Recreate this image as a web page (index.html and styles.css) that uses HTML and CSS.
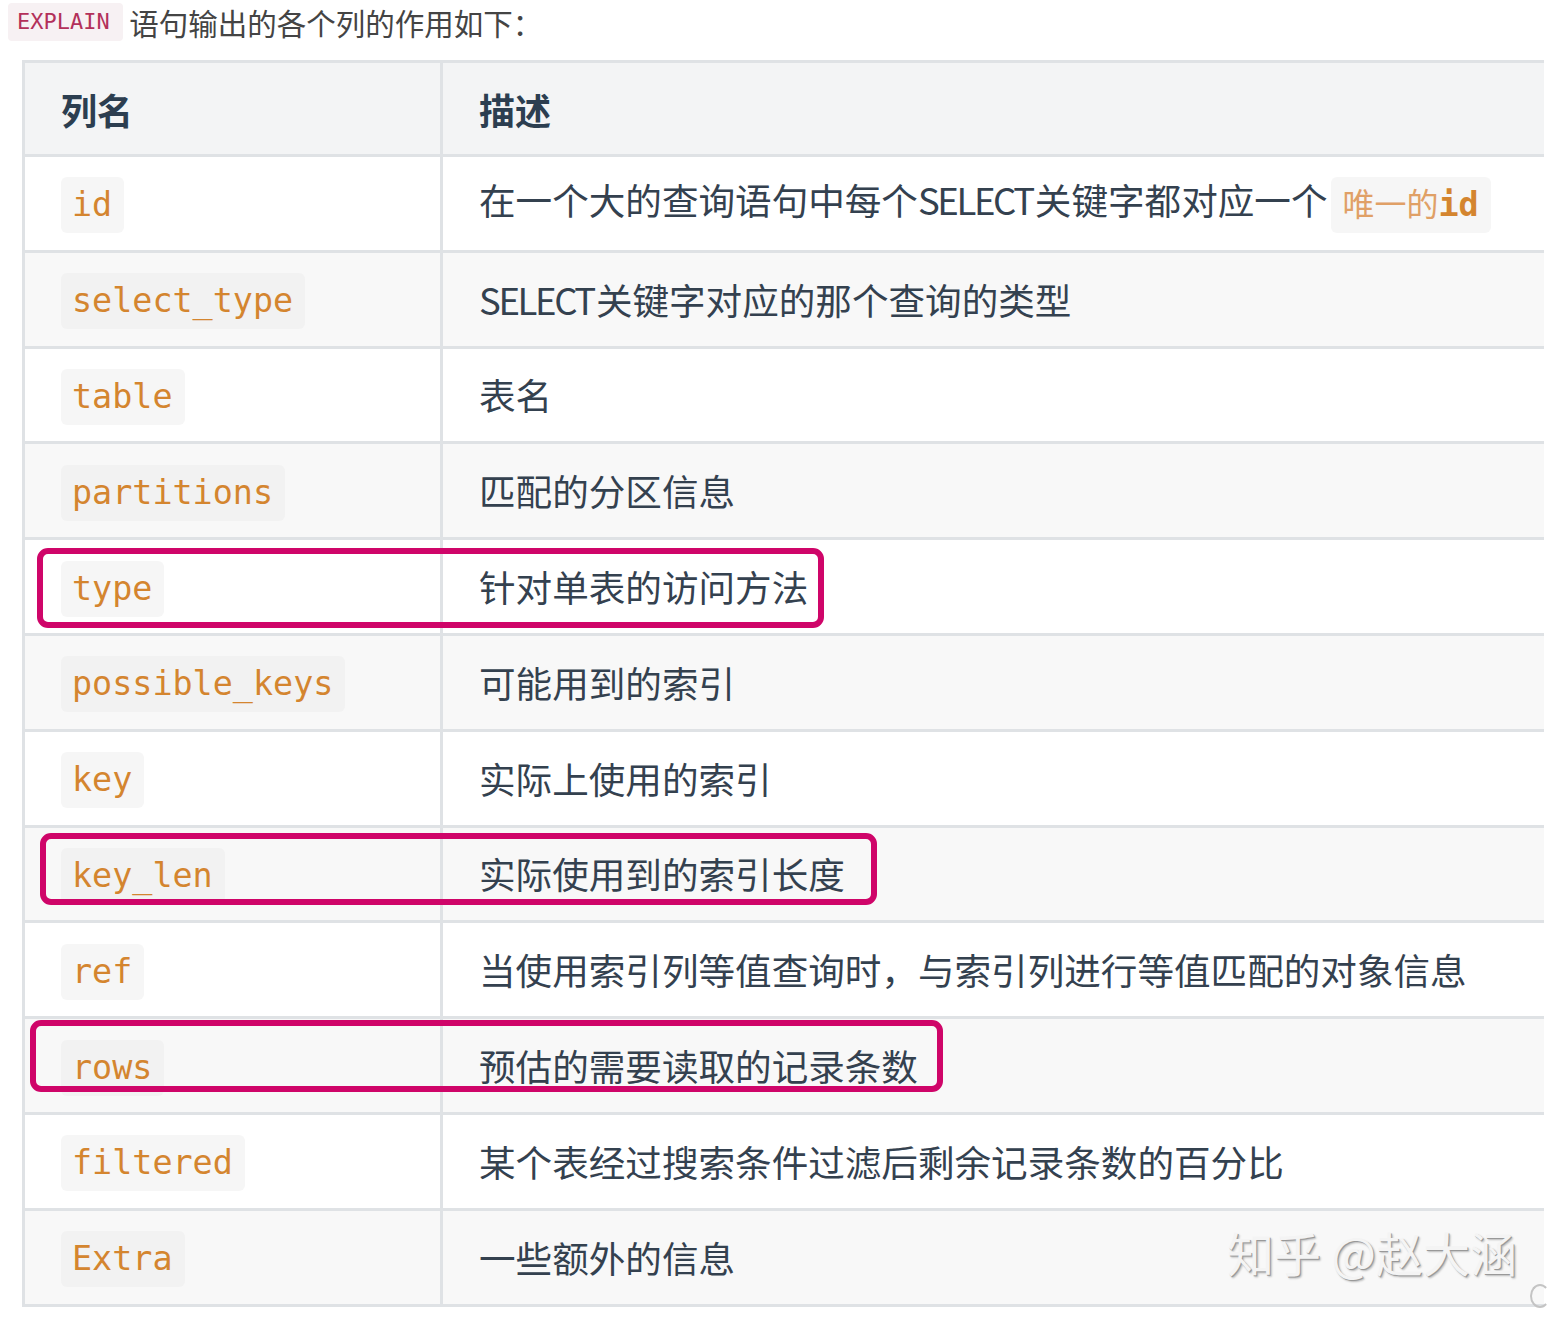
FILE: index.html
```html
<!DOCTYPE html>
<html lang="zh-CN">
<head>
    <meta charset="UTF-8">
    <title>EXPLAIN 输出列</title>
    <link rel="stylesheet" href="styles.css">
</head>
<body>
    <div class="page">
        <p class="intro"><code class="inline-code">EXPLAIN</code> 语句输出的各个列的作用如下：</p>

        <div class="table-wrap">
            <table class="explain-table">
                <thead>
                    <tr>
                        <th class="col-name">列名</th>
                        <th>描述</th>
                    </tr>
                </thead>
                <tbody>
                    <tr>
                        <td><code>id</code></td>
                        <td>在一个大的查询语句中每个<span class="latin">SELECT</span>关键字都对应一个<code class="cjk-code">唯一的<b>id</b></code></td>
                    </tr>
                    <tr>
                        <td><code>select_type</code></td>
                        <td><span class="latin">SELECT</span>关键字对应的那个查询的类型</td>
                    </tr>
                    <tr>
                        <td><code>table</code></td>
                        <td>表名</td>
                    </tr>
                    <tr>
                        <td><code>partitions</code></td>
                        <td>匹配的分区信息</td>
                    </tr>
                    <tr>
                        <td><code>type</code></td>
                        <td>针对单表的访问方法</td>
                    </tr>
                    <tr>
                        <td><code>possible_keys</code></td>
                        <td>可能用到的索引</td>
                    </tr>
                    <tr>
                        <td><code>key</code></td>
                        <td>实际上使用的索引</td>
                    </tr>
                    <tr>
                        <td><code>key_len</code></td>
                        <td>实际使用到的索引长度</td>
                    </tr>
                    <tr>
                        <td><code>ref</code></td>
                        <td>当使用索引列等值查询时，与索引列进行等值匹配的对象信息</td>
                    </tr>
                    <tr>
                        <td><code>rows</code></td>
                        <td>预估的需要读取的记录条数</td>
                    </tr>
                    <tr>
                        <td><code>filtered</code></td>
                        <td>某个表经过搜索条件过滤后剩余记录条数的百分比</td>
                    </tr>
                    <tr>
                        <td><code>Extra</code></td>
                        <td>一些额外的信息</td>
                    </tr>
                </tbody>
            </table>
        </div>

        <!-- 标注框 -->
        <div class="mark mark-type"></div>
        <div class="mark mark-keylen"></div>
        <div class="mark mark-rows"></div>

        <div class="watermark">知乎 @赵大涵</div>
        <div class="corner-arc"></div>
    </div>
</body>
</html>
```

FILE: styles.css
```css
* {
    margin: 0;
    padding: 0;
    box-sizing: border-box;
}

body {
    font-family: 'Noto Sans CJK SC', sans-serif;
    background: #ffffff;
    color: #34414f;
}

.page {
    position: relative;
    width: 1557px;
    min-height: 1320px;
}

.intro {
    padding: 3px 8px 0;
    font-size: 29.5px;
    line-height: 38px;
    color: #444444;
}

.inline-code {
    display: inline-block;
    font-family: 'DejaVu Sans Mono', monospace;
    font-size: 22px;
    line-height: 38px;
    padding: 0 13px 0 9px;
    background: #f7f1f3;
    color: #b3305a;
    border-radius: 4px;
    vertical-align: top;
}

.table-wrap {
    margin-top: 19px;
    margin-left: 22px;
    width: 1522px;
    overflow: hidden;
}

.explain-table {
    width: 1600px;
    border-collapse: collapse;
    font-size: 36.6px;
}

.explain-table th,
.explain-table td {
    border: 3px solid #dfe2e5;
    text-align: left;
    vertical-align: middle;
    padding: 0 36px;
    white-space: nowrap;
}

.explain-table th {
    height: 94px;
    background: #f3f4f5;
    color: #2c3e50;
    font-weight: 700;
    font-size: 36px;
}

.explain-table .col-name {
    width: 418px;
}

.explain-table td {
    height: 95.8px;
}

.explain-table tbody tr:nth-child(even) {
    background: #f8f8f8;
}

.explain-table code {
    display: inline-block;
    font-family: 'DejaVu Sans Mono', 'Noto Sans CJK SC', monospace;
    font-size: 33.4px;
    line-height: 40px;
    padding: 8px 12px 8px 11px;
    background: #f6f6f6;
    color: #d4852f;
    border-radius: 6px;
    vertical-align: middle;
}

.explain-table tbody tr:nth-child(even) code {
    background: #f2f2f2;
}

.explain-table .cjk-code {
    margin-left: 4px;
    font-size: 32px;
    color: #e0a066;
}

.explain-table .cjk-code b {
    color: #d4852f;
    font-size: 33.4px;
}

.latin {
    letter-spacing: -2.4px;
    margin-right: 2px;
}

/* 标注框 */
.mark {
    position: absolute;
    border: 6px solid #cf0569;
    border-radius: 11px;
}

.mark-type {
    left: 37px;
    top: 548px;
    width: 787px;
    height: 80px;
}

.mark-keylen {
    left: 40px;
    top: 833px;
    width: 837px;
    height: 72px;
}

.mark-rows {
    left: 30px;
    top: 1020px;
    width: 913px;
    height: 72px;
}

.watermark {
    position: absolute;
    left: 1227px;
    top: 1222px;
    font-size: 47px;
    line-height: 60px;
    color: #f4f4f4;
    text-shadow: 1px 1px 0 #999999, 2px 2px 2px rgba(0, 0, 0, 0.25);
    white-space: nowrap;
}

.corner-arc {
    position: absolute;
    left: 1530px;
    top: 1284px;
    width: 20px;
    height: 24px;
    border: 2px solid #c4c4c4;
    border-right-color: transparent;
    border-radius: 50%;
}
```
